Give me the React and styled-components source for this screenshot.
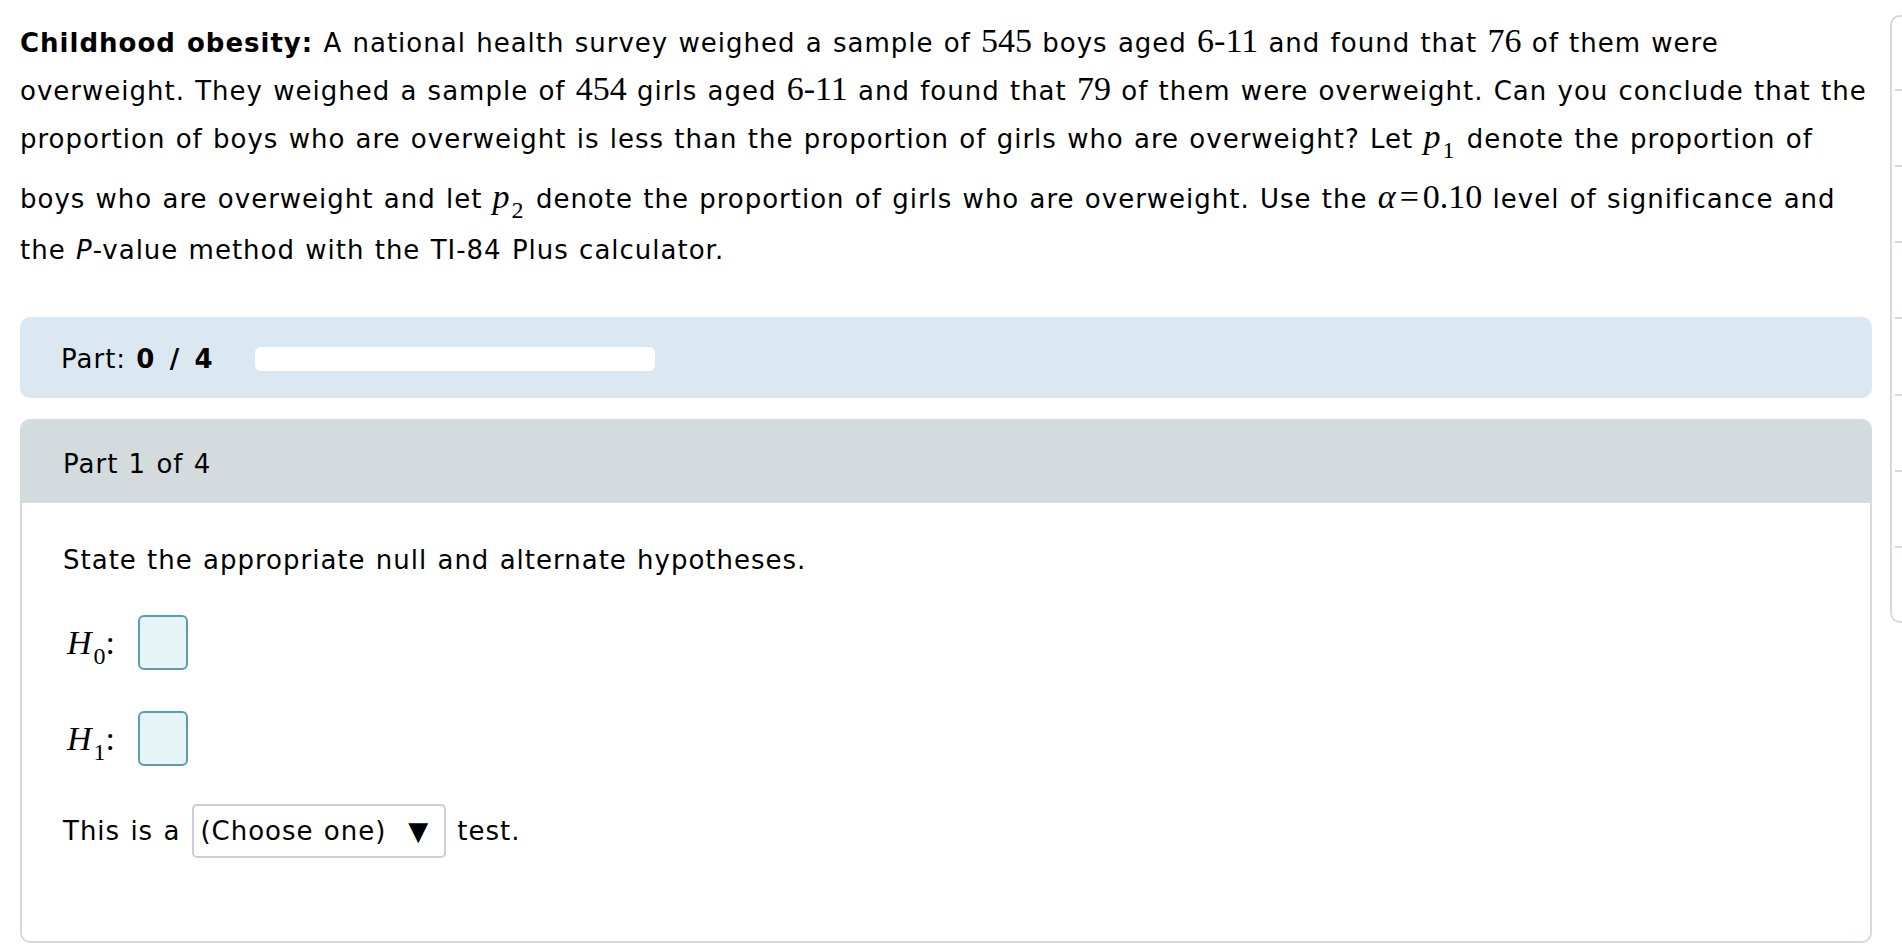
import React from 'react';
import styled, { createGlobalStyle } from 'styled-components';

const GlobalStyle = createGlobalStyle`
  html, body {
    margin: 0;
    padding: 0;
    background: #ffffff;
    overflow: hidden;
  }
  body {
    font-family: "DejaVu Sans", Verdana, sans-serif;
    font-size: 26px;
    line-height: 48px;
    letter-spacing: 1px;
    word-spacing: 1px;
    color: #000;
  }
`;

const Page = styled.div`
  display: flex;
  gap: 18px;
  padding-left: 20px;
  width: 100vw;
  height: 944px;
  box-sizing: border-box;
  overflow: hidden;
`;

const Main = styled.div`
  flex: 0 0 1852px;
  display: flex;
  flex-direction: column;
`;

const Question = styled.p`
  margin: 19px 0 0;
`;

const NoWrap = styled.span`
  white-space: nowrap;
`;

const Num = styled.span`
  font-family: "Liberation Serif", "Times New Roman", serif;
  font-size: 34px;
  line-height: 1;
  letter-spacing: 0;
  word-spacing: 0;
`;

const MathVar = styled.span`
  display: inline-block;
  font-family: "Liberation Serif", "Times New Roman", serif;
  font-style: italic;
  font-size: 34px;
  line-height: 40px;
  letter-spacing: 0;
  margin: 0 2px ${(p) => p.$push || 0}px 0;
`;

const Sub = styled.span`
  font-style: normal;
  font-size: 24px;
  line-height: 0;
  vertical-align: -10px;
  margin-left: 2px;
`;

const Eq = styled.span`
  margin: 0 4px;
`;

const ProgressBar = styled.div`
  margin-top: 43px;
  height: 81px;
  box-sizing: border-box;
  padding: 18px 41px 15px;
  background: #dce8f1;
  border-radius: 10px;
  display: flex;
  align-items: center;
`;

const ProgressLabel = styled.span`
  margin-right: 41px;
  white-space: nowrap;

  b {
    letter-spacing: 1.6px;
    word-spacing: 3px;
  }
`;

const Track = styled.div`
  width: 400px;
  height: 24px;
  background: #ffffff;
  border-radius: 6px;
`;

const Panel = styled.section`
  margin-top: 21px;
  border: 2px solid #d3dbde;
  border-radius: 10px;
  overflow: hidden;
`;

const PanelHeader = styled.div`
  background: #d3dbde;
  padding: 19px 41px 15px;
`;

const PanelBody = styled.div`
  padding: 33px 41px 83px 45px;
  display: flex;
  flex-direction: column;
  align-items: flex-start;
`;

const Prompt = styled.div`
  margin-left: -4px;
`;

const HypRow = styled.div`
  display: flex;
  align-items: center;
  height: 55px;
  margin-top: ${(p) => p.$top}px;
`;

const HypLabel = styled.span`
  font-family: "Liberation Serif", "Times New Roman", serif;
  font-size: 34px;
  line-height: 40px;
  letter-spacing: 0;
  width: 71px;
`;

const Italic = styled.span`
  font-style: italic;
`;

const AnswerBox = styled.div`
  width: 50px;
  height: 55px;
  box-sizing: border-box;
  background: #e6f4f7;
  border: 2px solid #5c9fa9;
  border-radius: 6px;
`;

const TestRow = styled.div`
  display: flex;
  align-items: center;
  height: 54px;
  margin-top: 38px;
  margin-left: -4px;
  white-space: nowrap;
`;

const Select = styled.div`
  height: 54px;
  box-sizing: border-box;
  margin: 0 11px 0 12px;
  padding: 0 16px 0 6px;
  border: 2px solid #cecece;
  border-radius: 5px;
  display: flex;
  align-items: center;
  gap: 22px;
`;

const Caret = styled.span`
  font-size: 26px;
  letter-spacing: 0;
`;

const Sidebar = styled.aside`
  flex: 0 0 300px;
  margin-top: 15px;
  height: 608px;
  box-sizing: border-box;
  border: 2px solid #d3dbde;
  border-radius: 10px;
  padding-left: 3px;
`;

const SideItem = styled.div`
  height: ${(p) => p.$h}px;
  border-bottom: 2px solid #d3dbde;
`;

export default function App() {
  return (
    <>
      <GlobalStyle />
      <Page>
        <Main>
          <Question>
            <b>Childhood obesity:</b> A national health survey weighed a sample of <Num>545</Num> boys aged{' '}
            <Num>6-11</Num> and found that <Num>76</Num> of them were overweight. They weighed a sample of{' '}
            <Num>454</Num> girls aged <Num>6-11</Num> and found that <Num>79</Num> of them were overweight. Can
            you conclude that the proportion of boys who are overweight is less than the proportion of girls who
            are overweight? Let{' '}
            <MathVar $push={18}>
              p<Sub>1</Sub>
            </MathVar>{' '}
            denote the proportion of boys who are overweight and let{' '}
            <MathVar $push={9}>
              p<Sub>2</Sub>
            </MathVar>{' '}
            denote the proportion of girls who are overweight. Use the{' '}
            <Num>
              <Italic>α</Italic>
              <Eq>=</Eq>0.10
            </Num>{' '}
            level of significance and the{' '}
            <NoWrap>
              <i>P</i>-value
            </NoWrap>{' '}
            method with the TI-84 Plus calculator.
          </Question>

          <ProgressBar>
            <ProgressLabel>
              Part: <b>0 / 4</b>
            </ProgressLabel>
            <Track />
          </ProgressBar>

          <Panel>
            <PanelHeader>Part 1 of 4</PanelHeader>
            <PanelBody>
              <Prompt>State the appropriate null and alternate hypotheses.</Prompt>
              <HypRow $top={31}>
                <HypLabel>
                  <Italic>H</Italic>
                  <Sub>0</Sub>:
                </HypLabel>
                <AnswerBox />
              </HypRow>
              <HypRow $top={41}>
                <HypLabel>
                  <Italic>H</Italic>
                  <Sub>1</Sub>:
                </HypLabel>
                <AnswerBox />
              </HypRow>
              <TestRow>
                This is a
                <Select>
                  <span>(Choose one)</span>
                  <Caret>▼</Caret>
                </Select>
                test.
              </TestRow>
            </PanelBody>
          </Panel>
        </Main>

        <Sidebar>
          {[72, 74, 74, 74, 75, 74, 74].map((h, i) => (
            <SideItem key={i} $h={h} />
          ))}
        </Sidebar>
      </Page>
    </>
  );
}
